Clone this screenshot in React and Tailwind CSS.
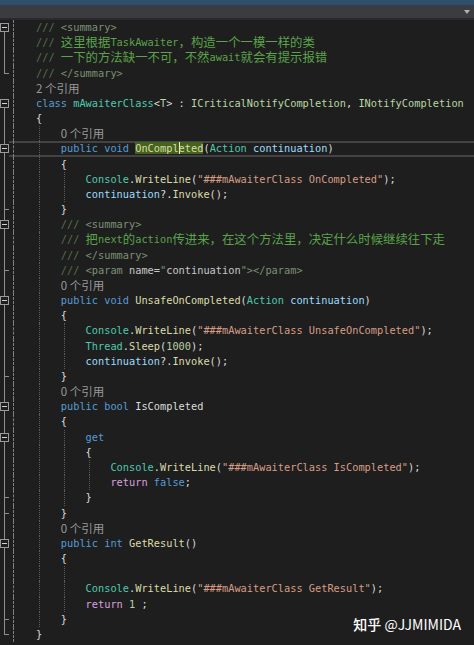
const K = {
  kw: "text-[#569cd6]",
  ty: "text-[#4ec9b0]",
  itf: "text-[#b8d7a3]",
  fn: "text-[#dcdcaa]",
  pm: "text-[#9cdcfe]",
  st: "text-[#d69d85]",
  nm: "text-[#b5cea8]",
  ct: "text-[#d8a0df]",
  pn: "text-[#dcdcdc]",
  cd: "text-[#55704c]",
  tag: "text-[#7c9174]",
  at: "text-[#c8c8c8]",
  cm: "text-[#5aa34b]",
  cz: "inline-block h-[13px] align-top text-[#5aa34b] font-['Noto_Sans_CJK_SC',sans-serif] text-[12.4px] leading-[15.18px]",
};

const log = (msg) => [
  ["ty", "Console"],
  ["pn", "."],
  ["fn", "WriteLine"],
  ["pn", "("],
  ["st", `"###mAwaiterClass ${msg}"`],
  ["pn", ");"],
];

const invoke = [
  ["pm", "continuation"],
  ["pn", "?."],
  ["fn", "Invoke"],
  ["pn", "();"],
];

// g = fold margin, i = indent level, t = tokens, lens = codelens text
const lines = [
  { g: "box0", i: 0, t: [["cd", "/// "], ["tag", "<summary>"]] },
  { g: "v", i: 0, t: [["cd", "/// "], ["cz", "这里根据"], ["cm", "TaskAwaiter"], ["cz", "，构造一个一模一样的类"]] },
  { g: "v", i: 0, t: [["cd", "/// "], ["cz", "一下的方法缺一不可，不然"], ["cm", "await"], ["cz", "就会有提示报错"]] },
  { g: "end", i: 0, t: [["cd", "/// "], ["tag", "</summary>"]] },
  { g: "", i: 0, lens: "2 个引用" },
  {
    g: "box0",
    i: 0,
    t: [
      ["kw", "class "],
      ["ty", "mAwaiterClass"],
      ["pn", "<"],
      ["itf", "T"],
      ["pn", "> : "],
      ["itf", "ICriticalNotifyCompletion"],
      ["pn", ", "],
      ["itf", "INotifyCompletion"],
    ],
  },
  { g: "v", i: 0, t: [["pn", "{"]] },
  { g: "v", i: 1, lens: "0 个引用" },
  { g: "box", i: 1, current: true },
  { g: "v", i: 1, t: [["pn", "{"]] },
  { g: "v", i: 2, t: log("OnCompleted") },
  { g: "v", i: 2, t: invoke },
  { g: "endMid", i: 1, t: [["pn", "}"]] },
  { g: "box", i: 1, t: [["cd", "/// "], ["tag", "<summary>"]] },
  {
    g: "v",
    i: 1,
    t: [
      ["cd", "/// "],
      ["cz", "把"],
      ["cm", "next"],
      ["cz", "的"],
      ["cm", "action"],
      ["cz", "传进来，在这个方法里，决定什么时候继续往下走"],
    ],
  },
  { g: "v", i: 1, t: [["cd", "/// "], ["tag", "</summary>"]] },
  {
    g: "endMid",
    i: 1,
    t: [
      ["cd", "/// "],
      ["tag", "<param "],
      ["at", "name="],
      ["tag", "\""],
      ["at", "continuation"],
      ["tag", "\"></param>"],
    ],
  },
  { g: "v", i: 1, lens: "0 个引用" },
  {
    g: "box",
    i: 1,
    t: [
      ["kw", "public void "],
      ["fn", "UnsafeOnCompleted"],
      ["pn", "("],
      ["ty", "Action "],
      ["pm", "continuation"],
      ["pn", ")"],
    ],
  },
  { g: "v", i: 1, t: [["pn", "{"]] },
  { g: "v", i: 2, t: log("UnsafeOnCompleted") },
  { g: "v", i: 2, t: [["ty", "Thread"], ["pn", "."], ["fn", "Sleep"], ["pn", "("], ["nm", "1000"], ["pn", ");"]] },
  { g: "v", i: 2, t: invoke },
  { g: "endMid", i: 1, t: [["pn", "}"]] },
  { g: "v", i: 1, lens: "0 个引用" },
  { g: "box", i: 1, t: [["kw", "public bool "], ["pn", "IsCompleted"]] },
  { g: "v", i: 1, t: [["pn", "{"]] },
  { g: "box", i: 2, t: [["kw", "get"]] },
  { g: "v", i: 2, t: [["pn", "{"]] },
  { g: "v", i: 3, t: log("IsCompleted") },
  { g: "v", i: 3, t: [["ct", "return "], ["kw", "false"], ["pn", ";"]] },
  { g: "endMid", i: 2, t: [["pn", "}"]] },
  { g: "endMid", i: 1, t: [["pn", "}"]] },
  { g: "v", i: 1, lens: "0 个引用" },
  { g: "box", i: 1, t: [["kw", "public int "], ["fn", "GetResult"], ["pn", "()"]] },
  { g: "v", i: 1, t: [["pn", "{"]] },
  { g: "v", i: 2, t: [] },
  { g: "v", i: 2, t: log("GetResult") },
  { g: "v", i: 2, t: [["ct", "return "], ["nm", "1"], ["pn", " ;"]] },
  { g: "endMid", i: 1, t: [["pn", "}"]] },
  { g: "end", i: 0, t: [["pn", "}"]] },
];

const FoldBox = () => (
  <div className="flex h-[9px] w-[9px] shrink-0 items-center justify-center border border-[#9a9a9a] bg-[#1e1e1e]">
    <div className="h-px w-[5px] bg-[#d0d0d0]" />
  </div>
);

const Fold = ({ kind }) => {
  if (kind === "box0")
    return (
      <>
        <div className="flex-1" />
        <FoldBox />
        <div className="w-px flex-1 bg-[#8e8e8e]" />
      </>
    );
  if (kind === "box")
    return (
      <>
        <div className="w-px flex-1 bg-[#8e8e8e]" />
        <FoldBox />
        <div className="w-px flex-1 bg-[#8e8e8e]" />
      </>
    );
  if (kind === "v") return <div className="w-px flex-1 bg-[#8e8e8e]" />;
  if (kind === "end")
    return (
      <>
        <div className="w-px flex-1 bg-[#8e8e8e]" />
        <div className="h-px w-[5px] self-end bg-[#8e8e8e]" />
        <div className="flex-1" />
      </>
    );
  if (kind === "endMid")
    return (
      <>
        <div className="w-px flex-1 bg-[#8e8e8e]" />
        <div className="h-px w-[5px] self-end bg-[#8e8e8e]" />
        <div className="w-px flex-1 bg-[#8e8e8e]" />
      </>
    );
  return null;
};

const CurrentLine = () => (
  <span>
    <span className={K.kw}>public void </span>
    <span className="bg-[#45631d] text-[#dcdcaa]">
      OnCompl
      <span className="-mr-px inline-block h-[12px] w-px bg-[#e6e6e6] align-[-2px]" />
      eted
    </span>
    <span className={K.pn}>(</span>
    <span className={K.ty}>Action </span>
    <span className={K.pm}>continuation</span>
    <span className={K.pn}>)</span>
  </span>
);

const Line = ({ line }) => (
  <div className="flex h-[15.18px]">
    <div className="flex w-[9px] shrink-0 flex-col items-center">
      <Fold kind={line.g} />
    </div>
    <div
      className={
        "flex flex-1 " +
        (line.current ? "shadow-[inset_0_2px_0_#434343,inset_0_-2px_0_#434343]" : "")
      }
    >
      <div className="w-[6px] shrink-0 pl-[4px]">
        <div className="h-full border-l border-dashed border-[#808080]" />
      </div>
      <div className="flex flex-1 pl-[21px] whitespace-pre">
        {Array.from({ length: line.i }).map((_, n) => (
          <span key={n} className="flex w-[4ch] shrink-0">
            <span className="ml-[3px] border-l border-dotted border-[#5c5c5c]" />
          </span>
        ))}
        {line.lens ? (
          <span className="font-['Noto_Sans_CJK_SC',sans-serif] text-[11.5px] text-[#9a9a9a]">
            {line.lens}
          </span>
        ) : line.current ? (
          <CurrentLine />
        ) : (
          <span>
            {line.t.map(([k, s], n) => (
              <span key={n} className={K[k]}>
                {s}
              </span>
            ))}
          </span>
        )}
      </div>
    </div>
  </div>
);

export default function App() {
  return (
    <div className="relative h-[645px] w-[474px] overflow-hidden bg-[#1e1e1e] font-['DejaVu_Sans_Mono',monospace] text-[10.3px] leading-[15.18px]">
      <div className="h-[5px] bg-[#2f506b]" />
      <div className="flex h-[13px] items-center justify-end bg-[#3b3b40] pr-[4px]">
        <svg width="6" height="4" viewBox="0 0 6 4">
          <polygon points="0,0 6,0 3,4" fill="#b0b0b0" />
        </svg>
      </div>
      <div className="h-[2px] bg-[#2a2a2c]" />
      {lines.map((line, n) => (
        <Line key={n} line={line} />
      ))}
      <div className="absolute right-[13px] top-[614px] font-['Noto_Sans_CJK_SC',sans-serif] text-[14px] leading-[20px] text-white">
        <span className="font-medium">知乎</span> @JJMIMIDA
      </div>
    </div>
  );
}
